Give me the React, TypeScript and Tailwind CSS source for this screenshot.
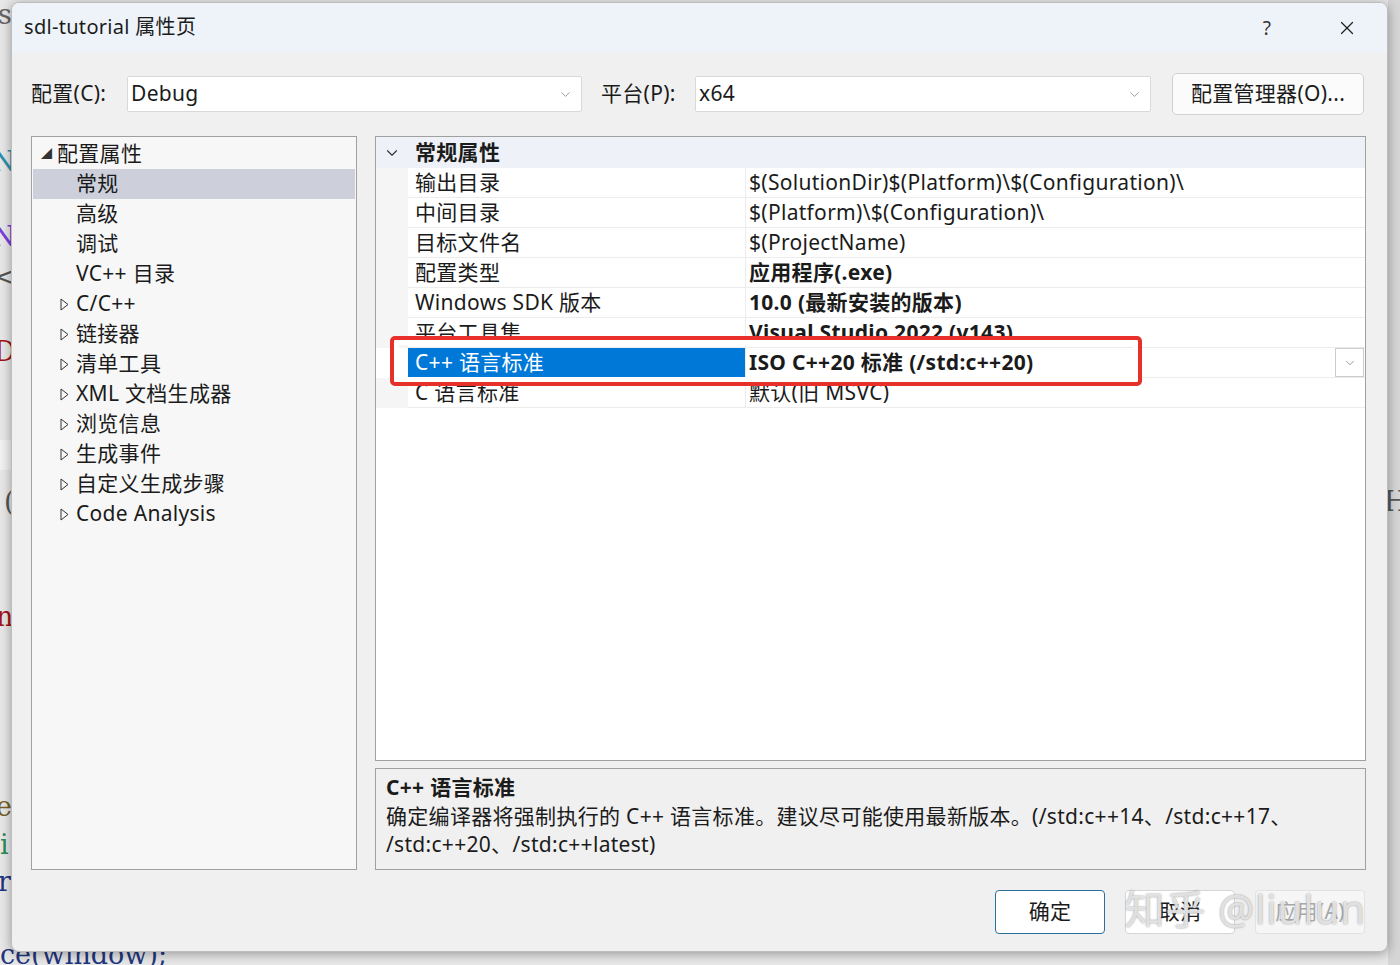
import { ChevronDown, X } from 'lucide-react'

const treeItems = [
  { label: '常规', selected: true },
  { label: '高级' },
  { label: '调试' },
  { label: 'VC++ 目录' },
  { label: 'C/C++', expandable: true },
  { label: '链接器', expandable: true },
  { label: '清单工具', expandable: true },
  { label: 'XML 文档生成器', expandable: true },
  { label: '浏览信息', expandable: true },
  { label: '生成事件', expandable: true },
  { label: '自定义生成步骤', expandable: true },
  { label: 'Code Analysis', expandable: true },
]

const rows = [
  { name: '输出目录', value: '$(SolutionDir)$(Platform)\\$(Configuration)\\' },
  { name: '中间目录', value: '$(Platform)\\$(Configuration)\\' },
  { name: '目标文件名', value: '$(ProjectName)' },
  { name: '配置类型', value: '应用程序(.exe)', bold: true },
  { name: 'Windows SDK 版本', value: '10.0 (最新安装的版本)', bold: true },
  { name: '平台工具集', value: 'Visual Studio 2022 (v143)', bold: true },
  { name: 'C++ 语言标准', value: 'ISO C++20 标准 (/std:c++20)', bold: true, selected: true },
  { name: 'C 语言标准', value: '默认(旧 MSVC)' },
]

// bits of the code editor peeking out behind the dialog
const codeBits = [
  { text: 's', top: -4, left: -2, color: 'text-[#666666]' },
  { text: 'N', top: 143, left: -8, color: 'text-[#2b91af]' },
  { text: 'N', top: 218, left: -8, color: 'text-[#7a3ee0]' },
  { text: '<', top: 258, left: -6, color: 'text-[#555555]' },
  { text: 'D', top: 333, left: -6, color: 'text-[#a31515]' },
  { text: '(', top: 483, left: 4, color: 'text-[#555555]' },
  { text: 'n', top: 598, left: -4, color: 'text-[#a31515]' },
  { text: 'e', top: 788, left: -4, color: 'text-[#795e26]' },
  { text: 'i', top: 826, left: 0, color: 'text-[#2e8b57]' },
  { text: 'r', top: 863, left: -2, color: 'text-[#1f377f]' },
  { text: 'ce(window);', top: 936, left: 0, color: 'text-[#1f377f]' },
  { text: 'H', top: 483, left: 1384, color: 'text-[#555555]' },
]

function Combo({ value, width }: { value: string; width: string }) {
  return (
    <div className={`${width} h-[36px] bg-white border border-[#d9d9d9] rounded-[2px] flex items-center justify-between pl-[3px] pr-[8px]`}>
      <span>{value}</span>
      <ChevronDown size={15} strokeWidth={1} className="text-[#606060]" />
    </div>
  )
}

function CollapsedArrow() {
  return (
    <svg width="9" height="13" viewBox="0 0 9 13" className="text-[#333333]">
      <path d="M1 1 L8 6.5 L1 12 Z" fill="none" stroke="currentColor" strokeWidth="1" strokeLinejoin="round" />
    </svg>
  )
}

function Tree() {
  return (
    <div className="w-[326px] h-full border border-[#a0a0a0] bg-[#f7f7f7] pt-[2px] px-[1px]">
      <div className="h-[30px] flex items-center">
        <span className="w-[24px] pl-[8px] text-[11px] text-[#333333]">◢</span>
        <span>配置属性</span>
      </div>
      {treeItems.map(item => (
        <div
          key={item.label}
          className={`h-[30px] flex items-center ${item.selected ? 'bg-[#cdd0db]' : ''}`}
        >
          <span className="w-[43px] pl-[27px] flex items-center">
            {item.expandable && <CollapsedArrow />}
          </span>
          <span>{item.label}</span>
        </div>
      ))}
    </div>
  )
}

function PropertyGrid() {
  return (
    <div className="relative h-[625px] border border-[#a0a0a0] bg-white">
      <div className="h-[31px] flex items-center bg-[#eef2f8]">
        <div className="w-[32px] flex justify-center">
          <ChevronDown size={18} strokeWidth={1.5} className="text-[#333333]" />
        </div>
        <span className="pl-[7px] font-bold">常规属性</span>
      </div>
      {rows.map(row => (
        <div key={row.name} className="h-[30px] flex">
          <div className={`w-[32px] ${row.selected ? 'bg-white' : 'bg-[#f5f5f5]'}`} />
          <div
            className={`w-[337px] flex items-center pl-[7px] border-b ${
              row.selected ? 'bg-[#0078d7] text-white border-[#0078d7]' : 'border-[#ececec]'
            } overflow-hidden whitespace-nowrap`}
          >
            {row.name}
          </div>
          <div className="flex-1 flex items-center justify-between pl-[3px] border-l border-b border-[#ececec] overflow-hidden whitespace-nowrap">
            <span className={row.bold ? 'font-bold' : ''}>{row.value}</span>
            {row.selected && (
              <div className="w-[29px] h-[29px] mr-[1px] border border-[#cccccc] bg-white flex items-center justify-center">
                <ChevronDown size={14} strokeWidth={1} className="text-[#555555]" />
              </div>
            )}
          </div>
        </div>
      ))}
      {/* red annotation box drawn over the screenshot */}
      <div className="absolute left-[14px] top-[199px] w-[752px] h-[50px] border-[4px] border-[#e8302a] rounded-[5px] shadow-[inset_0_0_0_5px_#ffffff] pointer-events-none" />
    </div>
  )
}

function Description() {
  return (
    <div className="h-[102px] border border-[#a0a0a0] bg-[#f0f0f0] pt-[3px] pl-[10px]">
      <div className="h-[30px] leading-[30px] font-bold">C++ 语言标准</div>
      <div className="leading-[28px]">
        确定编译器将强制执行的 C++ 语言标准。建议尽可能使用最新版本。(/std:c++14、/std:c++17、
        <br />
        /std:c++20、/std:c++latest)
      </div>
    </div>
  )
}

export default function App() {
  return (
    <div className="relative w-[1400px] h-[965px] overflow-hidden bg-[#e8e8e8] font-['Noto_Sans','Noto_Sans_CJK_SC',sans-serif] text-[21px] tracking-[0.3px] text-[#1b1b1b]">
      <div className="absolute left-[1388px] top-0 w-[12px] h-full bg-[#d6d6d6]" />
      <div className="absolute left-0 top-[440px] w-[12px] h-[30px] bg-[#f2f2f2]" />
      {codeBits.map((bit, i) => (
        <span
          key={i}
          className={`absolute font-['DejaVu_Serif',serif] text-[27px] leading-[38px] tracking-normal whitespace-pre ${bit.color}`}
          style={{ top: bit.top, left: bit.left }}
        >
          {bit.text}
        </span>
      ))}

      <div className="absolute left-[11px] top-[2px] w-[1377px] h-[950px] rounded-[8px] bg-[#f0f0f0] border border-[#bdbdbd] shadow-[0_2px_12px_rgba(0,0,0,0.35)] overflow-hidden flex flex-col">
        <div className="h-[50px] shrink-0 bg-[#eef3f9] flex items-center justify-between pl-[12px]">
          <span className="text-[20px] -mt-[2px]">sdl-tutorial 属性页</span>
          <div className="flex items-center h-full">
            <span className="w-[80px] text-center text-[19px] text-[#333333]">?</span>
            <div className="w-[80px] flex justify-center">
              <X size={22} strokeWidth={1.3} className="text-[#222222]" />
            </div>
          </div>
        </div>

        <div className="flex-1 flex flex-col pl-[19px] pr-[21px]">
          <div className="mt-[20px] h-[42px] flex items-center">
            <span className="w-[96px]">配置(C):</span>
            <Combo value="Debug" width="w-[455px]" />
            <span className="ml-[19px] w-[94px]">平台(P):</span>
            <Combo value="x64" width="w-[456px]" />
            <div className="ml-[21px] w-[192px] h-[42px] rounded-[5px] border border-[#d0d0d0] bg-[#fbfbfb] flex items-center justify-center">
              配置管理器(O)...
            </div>
          </div>

          <div className="mt-[21px] h-[734px] flex gap-[18px]">
            <Tree />
            <div className="flex-1 flex flex-col gap-[7px]">
              <PropertyGrid />
              <Description />
            </div>
          </div>

          <div className="relative mt-[20px] h-[44px] flex justify-end gap-[20px] pr-[1px]">
            <div className="w-[110px] h-[44px] rounded-[4px] border border-[#2a6f97] bg-white flex items-center justify-center">
              确定
            </div>
            <div className="w-[110px] h-[44px] rounded-[4px] border border-[#d5d5d5] bg-white flex items-center justify-center">
              取消
            </div>
            <div className="w-[110px] h-[44px] rounded-[4px] border border-[#e2e2e2] bg-[#f6f6f6] flex items-center justify-center text-[#a8a8a8]">
              应用(A)
            </div>
            {/* site watermark */}
            <div className="absolute right-[0px] top-[-6px] text-[40px] leading-[50px] tracking-[1px] text-[#f4f4f4]/80 [text-shadow:0_0_2px_#8a8a8a] pointer-events-none">
              知乎 @liulun
            </div>
          </div>
        </div>
      </div>
    </div>
  )
}
